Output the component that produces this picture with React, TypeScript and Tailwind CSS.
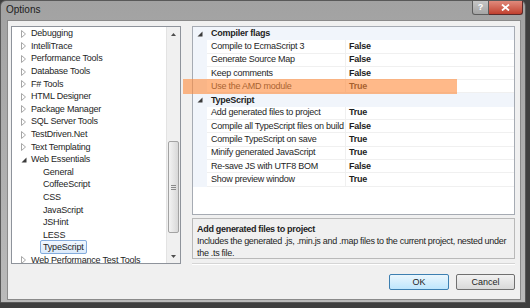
import React from 'react'

type TreeItem = { label: string; kind: 'closed' | 'open' | 'child'; selected?: boolean }

const tree: TreeItem[] = [
  { label: 'Debugging', kind: 'closed' },
  { label: 'IntelliTrace', kind: 'closed' },
  { label: 'Performance Tools', kind: 'closed' },
  { label: 'Database Tools', kind: 'closed' },
  { label: 'F# Tools', kind: 'closed' },
  { label: 'HTML Designer', kind: 'closed' },
  { label: 'Package Manager', kind: 'closed' },
  { label: 'SQL Server Tools', kind: 'closed' },
  { label: 'TestDriven.Net', kind: 'closed' },
  { label: 'Text Templating', kind: 'closed' },
  { label: 'Web Essentials', kind: 'open' },
  { label: 'General', kind: 'child' },
  { label: 'CoffeeScript', kind: 'child' },
  { label: 'CSS', kind: 'child' },
  { label: 'JavaScript', kind: 'child' },
  { label: 'JSHint', kind: 'child' },
  { label: 'LESS', kind: 'child' },
  { label: 'TypeScript', kind: 'child', selected: true },
  { label: 'Web Performance Test Tools', kind: 'closed' },
]

const groups = [
  {
    title: 'Compiler flags',
    rows: [
      ['Compile to EcmaScript 3', 'False'],
      ['Generate Source Map', 'False'],
      ['Keep comments', 'False'],
      ['Use the AMD module', 'True'],
    ],
  },
  {
    title: 'TypeScript',
    rows: [
      ['Add generated files to project', 'True'],
      ['Compile all TypeScript files on build', 'False'],
      ['Compile TypeScript on save', 'True'],
      ['Minify generated JavaScript', 'True'],
      ['Re-save JS with UTF8 BOM', 'False'],
      ['Show preview window', 'True'],
    ],
  },
]

function Closed() {
  return (
    <svg width="5" height="8" viewBox="0 0 5 8" className="shrink-0">
      <polygon points="0.5,0.5 4.5,4 0.5,7.5" fill="#fff" stroke="#a6a6a6" strokeWidth="1" />
    </svg>
  )
}

function Open() {
  return (
    <svg width="6" height="6" viewBox="0 0 6 6" className="shrink-0">
      <polygon points="5.5,0.5 5.5,5.5 0.5,5.5" fill="#3b3b3b" />
    </svg>
  )
}

function TreePanel() {
  return (
    <div className="w-[170px] h-[238px] bg-white border border-[#8e939b] flex">
      <div className="flex-1 pt-[0.5px] overflow-hidden">
        {tree.map((t) => (
          <div key={t.label} className="h-[12.6px] flex items-center text-[9px] leading-none tracking-[-0.2px] text-[#1e1e1e] whitespace-nowrap">
            {t.kind === 'child' ? (
              <div className="pl-[28px]">
                <span
                  className={
                    t.selected
                      ? 'px-[2px] py-[1px] border border-[#84acdd] rounded-[2px] bg-gradient-to-b from-[#f2f8fe] to-[#dbeafb]'
                      : 'px-[3px]'
                  }
                >
                  {t.label}
                </span>
              </div>
            ) : (
              <div className="pl-[9px] flex items-center">
                <div className="w-[9px] flex items-center">{t.kind === 'open' ? <Open /> : <Closed />}</div>
                <span className="ml-[1px]">{t.label}</span>
              </div>
            )}
          </div>
        ))}
      </div>
      {/* scrollbar */}
      <div className="w-[14px] bg-[#f0f0f0] border-l border-[#e3e3e3] flex flex-col">
        <div className="h-[14px] flex items-center justify-center">
          <svg width="5" height="3" viewBox="0 0 5 3">
            <polygon points="0,3 2.5,0 5,3" fill="#4d4d4d" />
          </svg>
        </div>
        <div className="h-[100px]" />
        <div className="mx-[1px] h-[92px] rounded-[2px] border border-[#a3a3a3] bg-gradient-to-r from-[#f3f3f3] to-[#d8d8d8] flex flex-col items-center justify-center gap-[1px]">
          <div className="w-[5px] h-px bg-[#8a8a8a]" />
          <div className="w-[5px] h-px bg-[#8a8a8a]" />
          <div className="w-[5px] h-px bg-[#8a8a8a]" />
        </div>
        <div className="flex-1" />
        <div className="h-[14px] flex items-center justify-center">
          <svg width="5" height="3" viewBox="0 0 5 3">
            <polygon points="0,0 2.5,3 5,0" fill="#4d4d4d" />
          </svg>
        </div>
      </div>
    </div>
  )
}

function Grid() {
  return (
    <div className="h-[189px] bg-white border border-[#a6abb3] text-[9px] leading-none tracking-[-0.25px] text-[#1e1e1e]">
      {groups.map((g) => (
        <div key={g.title}>
          <div className="h-[13.3px] flex items-center bg-[#f1f5fb]">
            <div className="w-[14px] flex justify-center">
              <Open />
            </div>
            <span className="font-bold ml-[4px]">{g.title}</span>
          </div>
          {g.rows.map(([name, val]) => (
            <div key={name} className="h-[13.3px] flex bg-[#f1f5fb]">
              <div className="w-[14px]" />
              <div className="flex-1 flex bg-white border-b border-[#f0f0f0]">
                <div className="w-[139px] pl-[4px] flex items-center border-r border-[#f0f0f0] whitespace-nowrap overflow-hidden">
                  {name}
                </div>
                <div className="pl-[3px] flex items-center font-bold">{val}</div>
              </div>
            </div>
          ))}
        </div>
      ))}
    </div>
  )
}

export default function App() {
  return (
    <div className="w-[530px] h-[308px] bg-[#3f3f3f] relative overflow-hidden font-['Liberation_Sans',Arial,sans-serif]">
      <div className="w-[526px] h-[303px] bg-gradient-to-b from-[#a2a2a2] to-[#bababa] border border-[#595959] rounded-t-[6px] flex flex-col">
        {/* title bar */}
        <div className="h-[19px] flex items-start justify-between">
          <span className="pl-[5px] pt-[4px] text-[10px] leading-none text-[#1b1b1b]">Options</span>
          <div className="flex mr-[2px]">
            <div className="w-[17px] h-[14px] border border-[#5c5c5c] border-t-0 rounded-bl-[3px] bg-gradient-to-b from-[#c6c6c6] to-[#a5a5a5] flex items-center justify-center text-[9px] font-bold text-white leading-none">
              ?
            </div>
            <div className="w-[34px] h-[14px] border border-[#5c2a2a] border-t-0 border-l-0 rounded-br-[3px] bg-gradient-to-b from-[#e08a7c] to-[#c13f2e] flex items-center justify-center">
              <svg width="9" height="7" viewBox="0 0 9 7">
                <path d="M1 0.5 L8 6.5 M8 0.5 L1 6.5" stroke="#fff" strokeWidth="1.8" />
              </svg>
            </div>
          </div>
        </div>
        {/* client */}
        <div className="ml-[6px] mr-[4px] h-[280px] bg-[#f0f0f0] border border-[#8a8a8a] pl-[3px] pt-[5px] flex gap-[11px]">
          <TreePanel />
          <div className="w-[323px] flex flex-col">
            <Grid />
            <div className="mt-[3px] h-[41px] border border-[#b9b9b9] bg-[#f0f0f0] pl-[4px] pr-[2px] pt-[4px] text-[9px] tracking-[-0.3px] text-[#1e1e1e] leading-[12px]">
              <div className="font-bold">Add generated files to project</div>
              <div>Includes the generated .js, .min.js and .map files to the current project, nested under the .ts file.</div>
            </div>
            <div className="mt-[4px] h-[2px] border-t border-[#d5d5d5] border-b border-b-white" />
            <div className="mt-[9px] flex justify-end gap-[7px]">
              <button className="w-[60px] h-[16px] rounded-[2px] border border-[#3c7fb1] bg-gradient-to-b from-[#eaf6fd] to-[#bee6fd] text-[9px] leading-none text-[#1e1e1e]">
                OK
              </button>
              <button className="w-[59px] h-[16px] rounded-[2px] border border-[#707070] bg-gradient-to-b from-[#f2f2f2] to-[#d9d9d9] text-[9px] leading-none text-[#1e1e1e]">
                Cancel
              </button>
            </div>
          </div>
        </div>
      </div>
      {/* highlight annotation */}
      <div className="absolute left-[183px] top-[79px] w-[274px] h-[15px] bg-[#ff8a3a]/60" />
    </div>
  )
}
